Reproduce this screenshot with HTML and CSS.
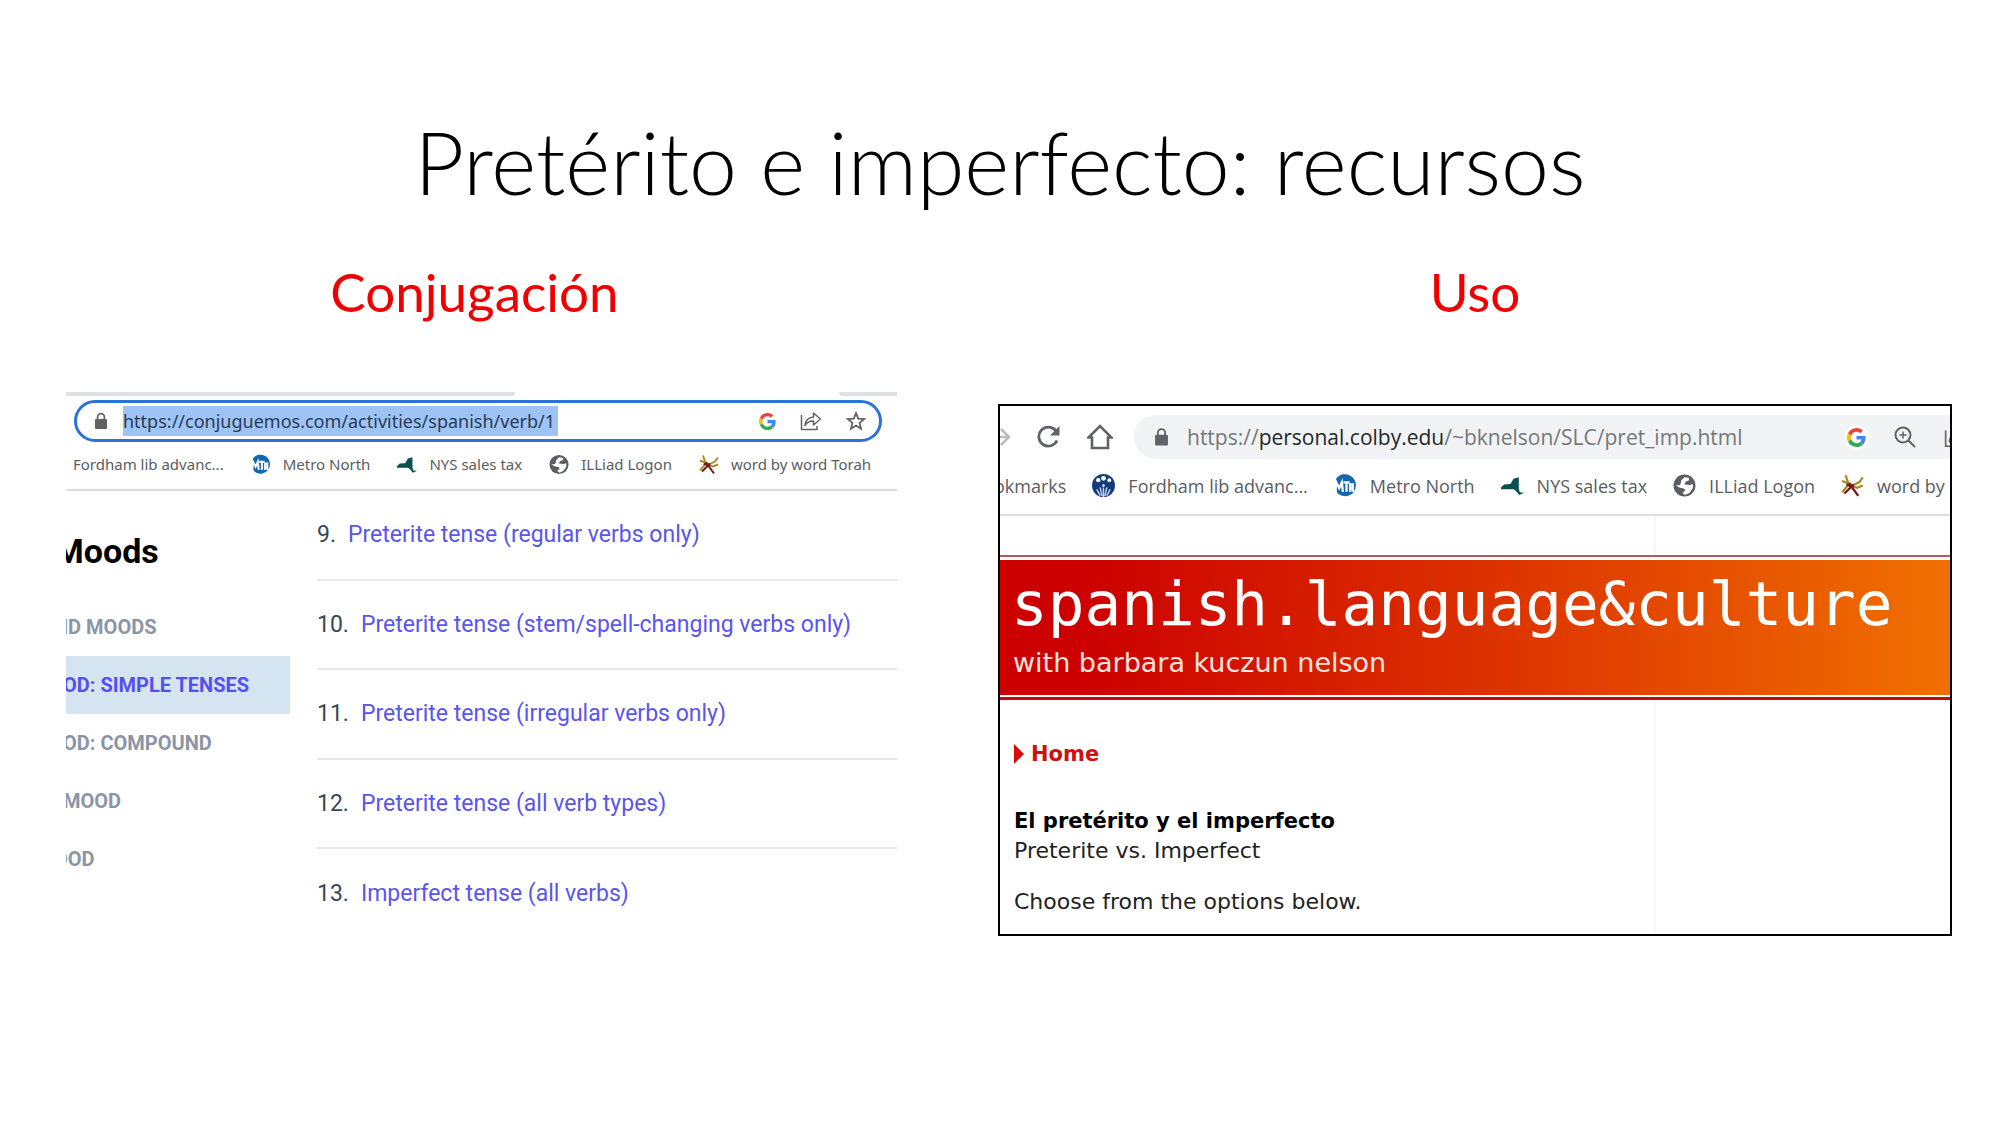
FILE: index.html
```html
<!DOCTYPE html>
<html lang="es">
<head>
<meta charset="utf-8">
<title>Pretérito e imperfecto: recursos</title>
<link rel="stylesheet" href="styles.css">
</head>
<body>
<svg width="0" height="0" class="defs" aria-hidden="true">
  <symbol id="lock" viewBox="0 0 14 18"><rect x="1" y="7" width="12" height="10" rx="1" fill="#5f6368"/><path d="M3.6 8V5a3.4 3.4 0 0 1 6.8 0v3" fill="none" stroke="#5f6368" stroke-width="1.7"/></symbol>
  <symbol id="google" viewBox="0 0 48 48"><path fill="#ea4335" d="M24 9.5c3.5 0 6.700 1.200 9.200 3.600l6.900-6.900C35.900 2.400 30.500 0 24 0 14.600 0 6.500 5.400 2.600 13.200l8 6.200C12.400 13.700 17.700 9.500 24 9.500z"/><path fill="#4285f4" d="M47 24.500c0-1.600-.2-3.100-.4-4.500H24v9h12.900c-.6 3-2.200 5.500-4.700 7.200l7.700 6C44.400 38 47 32 47 24.500z"/><path fill="#fbbc05" d="M10.500 28.600a14.500 14.500 0 0 1 0-9.200l-8-6.200a24 24 0 0 0 0 21.600z"/><path fill="#34a853" d="M24 48c6.500 0 11.900-2.100 15.900-5.800l-7.700-6c-2.200 1.500-4.900 2.300-8.200 2.300-6.300 0-11.600-4.200-13.500-9.900l-8 6.200C6.500 42.600 14.600 48 24 48z"/></symbol>
  <symbol id="share" viewBox="0 0 22 20"><path d="M1.500 4v14.500H17V15" fill="none" stroke="#5f6368" stroke-width="1.500"/><path d="M5 14.500c.3-5 3.300-8 8.500-8.500V2l7 6-7 6v-4c-4-.2-6.500 1.200-8.500 4.500z" fill="none" stroke="#5f6368" stroke-width="1.500" stroke-linejoin="round"/></symbol>
  <symbol id="star" viewBox="0 0 20 20"><path d="M10 2.200l2.200 5.500 5.900.4-4.500 3.800 1.400 5.800-5-3.200-5 3.200 1.400-5.800L1.900 8.100l5.900-.4z" fill="none" stroke="#5f6368" stroke-width="1.800"/></symbol>
  <symbol id="mta" viewBox="0 0 22 22"><path d="M2 4.500A10.500 10.500 0 1 1 4 19L1 14z" fill="#1466b0"/><path d="M1.500 17l.5-9.500 3 6 2.500-5.500 1 9M9 8h6M12 8v9M15.500 17V10h2.500v7M15.500 13.500h3" fill="none" stroke="#fff" stroke-width="2.200"/></symbol>
  <symbol id="nys" viewBox="0 0 22 20"><path d="M0 12l3-3 6-.5 3-5L17 2v11l1 3.500 4 .5-4.500 2L14 15l-2-1.500H0z" fill="#0c4f4f"/></symbol>
  <symbol id="globe" viewBox="0 0 22 22"><circle cx="11" cy="11" r="10.500" fill="#5a5e62"/><path d="M11 3l4 .5.5 2.500-3.500 1.500L11 10l5 .5 3-1v4l-3 4.500-4.500 2L9 18l2.500-2-.5-2-5-1-3.500-2.500c2 .5 4 .5 4.500-.5L8 6z" fill="#fff"/></symbol>
  <symbol id="torah" viewBox="0 0 20 20"><path d="M4 1l2 6 4 3 6-3 3-4M1 6l5 2-1 3-4 5M8 10l6 2 5-2" fill="none" stroke="#a98a26" stroke-width="1.900"/><path d="M7 8l8 11M11 9L3 17M5 9l6 3" fill="none" stroke="#701c1c" stroke-width="2"/></symbol>
  <symbol id="fordham" viewBox="0 0 24 24"><circle cx="12" cy="12" r="12" fill="#123a7c"/><g fill="#fff"><circle cx="6.500" cy="6.500" r="2.200"/><circle cx="12" cy="4.500" r="2.500"/><circle cx="18" cy="6.500" r="2"/><circle cx="12" cy="12" r="1.300"/></g><path d="M12 14v10M8.500 14l2 9M15.500 14l-2 9M5 16l3.500 6.500M19 16l-3.500 6.500" stroke="#c9d5ea" stroke-width="1.500"/></symbol>
</svg>

<main class="slide">
  <h1>Pretérito e imperfecto: recursos</h1>
  <div class="columns">
    <section class="column">
      <h2 class="left-title">Conjugación</h2>
      <div class="browser verbs">
        <div class="tabs"><i class="tab"></i><i class="tab last"></i></div>
        <div class="omnibox focused">
          <svg class="lock"><use href="#lock"/></svg>
          <input class="url" type="text" aria-label="Address" value="https://conjuguemos.com/activities/spanish/verb/1">
          <div class="tools">
            <button aria-label="Google"><svg width="17" height="17"><use href="#google"/></svg></button>
            <button aria-label="Share"><svg width="22" height="20"><use href="#share"/></svg></button>
            <button aria-label="Bookmark"><svg width="20" height="20"><use href="#star"/></svg></button>
          </div>
        </div>
        <nav class="bookmarks">
          <a href="#">Fordham lib advanc...</a>
          <a href="#"><svg><use href="#mta"/></svg>Metro North</a>
          <a href="#"><svg><use href="#nys"/></svg>NYS sales tax</a>
          <a href="#"><svg><use href="#globe"/></svg>ILLiad Logon</a>
          <a href="#"><svg><use href="#torah"/></svg>word by word Torah</a>
        </nav>
        <div class="page">
          <aside>
            <h3 class="cut-more">Moods</h3>
            <a href="#" class="cut-more">ND MOODS</a>
            <a href="#" class="active">OD: SIMPLE TENSES</a>
            <a href="#">OD: COMPOUND</a>
            <a href="#">MOOD</a>
            <a href="#" class="cut-more">OOD</a>
          </aside>
          <ol>
            <li><span>9.</span><a href="#">Preterite tense (regular verbs only)</a></li>
            <li><span>10.</span><a href="#">Preterite tense (stem/spell-changing verbs only)</a></li>
            <li><span>11.</span><a href="#">Preterite tense (irregular verbs only)</a></li>
            <li><span>12.</span><a href="#">Preterite tense (all verb types)</a></li>
            <li><span>13.</span><a href="#">Imperfect tense (all verbs)</a></li>
          </ol>
        </div>
      </div>
    </section>

    <section class="column">
      <h2>Uso</h2>
      <div class="browser usage">
        <div class="toolbar">
          <button aria-label="Forward"><svg width="11" height="22" viewBox="0 0 11 22"><path d="M0 11h9M1 3l8 8-8 8" fill="none" stroke="#babcbe" stroke-width="2.500"/></svg></button>
          <button aria-label="Reload"><svg width="24" height="24" viewBox="0 0 24 24"><path d="M20 15.500A9.500 9.500 0 1 1 19 6" fill="none" stroke="#5f6368" stroke-width="2.800"/><path d="M22.500 1v9.500H13z" fill="#5f6368"/></svg></button>
          <button aria-label="Home"><svg width="26" height="26" viewBox="0 0 26 26"><path d="M1.500 13.500L13 2l11.500 11.500H21V24H5V13.500z" fill="none" stroke="#5f6368" stroke-width="2.600"/></svg></button>
          <div class="omnibox">
            <svg class="lock"><use href="#lock"/></svg>
            <span class="address">https://<b>personal.colby.edu</b>/~bknelson/SLC/pret_imp.html</span>
            <div class="tools">
              <button aria-label="Google" class="round"><svg width="19" height="19"><use href="#google"/></svg></button>
              <button aria-label="Zoom"><svg width="22" height="22" viewBox="0 0 22 22"><g fill="none" stroke="#5f6368" stroke-width="2"><circle cx="9" cy="9" r="7.500"/><path d="M14.500 14.500L21 21"/><path d="M5.500 9h7M9 5.500v7" stroke-width="1.600"/></g></svg></button>
              <button aria-label="Share" class="cropped"><svg width="24" height="22"><use href="#share"/></svg></button>
            </div>
          </div>
        </div>
        <nav class="bookmarks">
          <a href="#">okmarks</a>
          <a href="#"><svg><use href="#fordham"/></svg>Fordham lib advanc...</a>
          <a href="#"><svg><use href="#mta"/></svg>Metro North</a>
          <a href="#"><svg><use href="#nys"/></svg>NYS sales tax</a>
          <a href="#"><svg><use href="#globe"/></svg>ILLiad Logon</a>
          <a href="#"><svg><use href="#torah"/></svg>word by</a>
        </nav>
        <div class="page">
          <header class="banner">
            <div class="banner-fill">
              <p class="site">spanish.language&amp;culture</p>
              <p class="author">with barbara kuczun nelson</p>
            </div>
          </header>
          <div class="text">
            <a href="#" class="home"><svg width="10" height="20" viewBox="0 0 10 20"><path d="M0 0l10 10L0 20z" fill="#d60c0c"/></svg>Home</a>
            <h3>El pretérito y el imperfecto</h3>
            <p>Preterite vs. Imperfect</p>
            <p class="choose">Choose from the options below.</p>
          </div>
        </div>
      </div>
    </section>
  </div>
</main>
</body>
</html>
```
FILE: styles.css
```css
* { box-sizing: border-box; }
body { margin: 0; background: #fff; color: #000; }
h1, h2, h3, p, ol { margin: 0; padding: 0; font-weight: 400; }
a { text-decoration: none; color: inherit; }
button { border: 0; padding: 0; background: none; display: flex; flex: none; }
svg { flex: none; display: block; }
.defs { position: absolute; }

.slide { padding: 112px 48px 60px 66px; }
h1 { font: 300 86px/100px Lato, "Open Sans", sans-serif; text-align: center; padding-right: 18px; }
.columns { display: grid; grid-template-columns: 831fr 954fr; column-gap: 101px; padding-top: 50px; align-items: start; }
.column { min-width: 0; }
h2 { font: 400 53px/60px Lato, "Open Sans", sans-serif; color: #f00000; text-align: center; }
.left-title { padding-right: 14px; }
.browser { overflow: hidden; background: #fff; }

/* Shared browser chrome */
.omnibox { display: flex; align-items: center; }
.tools { display: flex; align-items: center; margin-left: auto; }
.bookmarks { display: flex; align-items: center; white-space: nowrap; color: #5a5d61; }
.bookmarks a { display: flex; align-items: center; flex: none; }

/* Verb list window */
.verbs { margin-top: 70px; }
.tabs { display: flex; justify-content: space-between; height: 4px; margin-bottom: 4px; }
.tab { width: 54%; background: #dee1e6; border-radius: 0 0 6px 0; }
.tab.last { width: 7%; border-radius: 0 0 0 6px; }
.focused { height: 42px; margin: 0 15px 0 8px; padding: 0 13px 0 17px; border: 3px solid #2a72d9; border-radius: 21px; }
.focused .lock { width: 14px; height: 18px; }
.url { width: 435px; height: 30px; margin-left: 15px; padding: 0; border: 0; outline: 0; background: #9dc3f7; color: #2c3b50; font: 18px/28px "Noto Sans", sans-serif; }
.focused .tools { gap: 24px; }
.verbs .bookmarks { height: 49px; padding: 0 0 3px 7px; gap: 27px; border-bottom: 2px solid #dadce0; font: 15px/20px "Noto Sans", sans-serif; }
.verbs .bookmarks a { gap: 12px; }
.verbs .bookmarks svg { width: 20px; height: 21px; }
.verbs .page { display: grid; grid-template-columns: 224px 1fr; column-gap: 27px; font-family: Roboto, sans-serif; }
aside { overflow: hidden; color: #8b95a5; font-weight: 700; font-size: 20px; }
aside h3 { height: 107px; font-size: 34px; line-height: 121px; font-weight: 700; color: #000; }
aside a { display: block; line-height: 58px; white-space: nowrap; text-indent: -3px; }
aside .active { background: #d5e4f1; color: #5450f0; }
aside .cut-more { text-indent: -12px; }
ol { list-style: none; display: grid; grid-template-rows: repeat(5, 1fr); min-height: 448px; }
li { display: flex; align-items: center; gap: 12px; border-bottom: 2px solid #e4e8ee; font-size: 23px; white-space: nowrap; color: #36475a; }
li:last-child { border-bottom-color: transparent; }
li a { color: #5a55ee; }

/* Usage window */
.usage { margin-top: 82px; border: 2px solid #000; }
.toolbar { display: flex; align-items: center; padding-top: 9px; }
.toolbar > button { margin-right: 26px; }
.toolbar > button:last-of-type { margin-right: 21px; }
.toolbar .omnibox { flex: 1; min-width: 0; height: 44px; padding-left: 20px; background: #f1f3f4; border-radius: 22px 0 0 22px; }
.usage .lock { width: 15px; height: 20px; }
.address { margin-left: 18px; padding-bottom: 1px; font: 21px/28px "Open Sans", sans-serif; color: #74787d; white-space: nowrap; }
.address b { font-weight: 400; color: #24272b; }
.usage .tools { gap: 28px; }
.round { background: #fff; border-radius: 50%; box-shadow: 0 0 0 3px #fff; }
.cropped { width: 6px; overflow: hidden; }
.usage .bookmarks { height: 57px; margin-left: -6px; padding-bottom: 2px; gap: 26px; border-bottom: 2px solid #dcdee0; font: 18px/24px "Open Sans", sans-serif; }
.usage .bookmarks a { gap: 13px; }
.usage .bookmarks svg { width: 23px; height: 23px; }
.usage .page { padding-top: 39px; background: linear-gradient(#f7f7f7, #f7f7f7) 69% 0 / 2px 100% no-repeat; font-family: "DejaVu Sans", sans-serif; }
.banner { padding: 3px 0 2px; border-top: 2px solid #b95a5a; border-bottom: 3px solid #c80808; background: #fff; }
.banner-fill { height: 135px; padding: 8px 0 0 11px; background: linear-gradient(90deg, #cc0000 8%, #dc3000 50%, #f07000); color: #fff; }
.site { font: 61px/72px "DejaVu Sans Mono", monospace; white-space: nowrap; }
.author { padding-left: 2px; font-size: 27px; line-height: 46px; color: #ffe4de; }
.text { padding: 39px 14px 17px; font-size: 22px; line-height: 30px; color: #222; }
.home { display: flex; align-items: center; gap: 7px; color: #d01010; font-weight: 700; font-size: 21px; }
.text h3 { margin-top: 37px; font-size: 21px; font-weight: 700; color: #000; }
.choose { margin-top: 21px; }
```
